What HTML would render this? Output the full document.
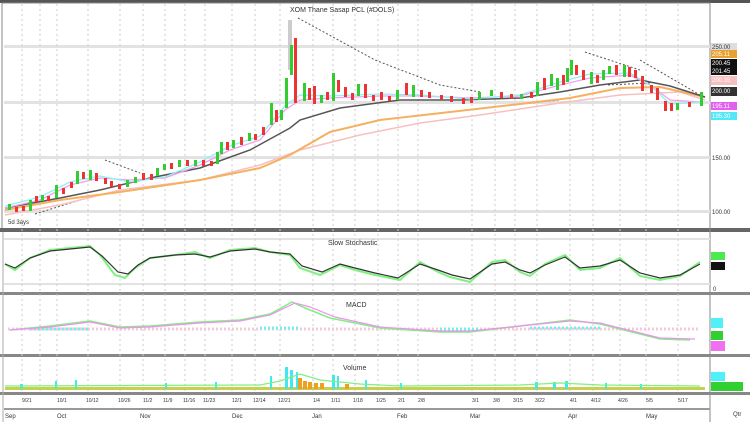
<!DOCTYPE html>
<html><head><meta charset="utf-8"><style>
html,body{margin:0;padding:0;background:#fff;width:750px;height:422px;overflow:hidden}
svg{display:block}
text{font-family:"Liberation Sans",sans-serif}
</style></head><body>
<svg width="750" height="422" viewBox="0 0 750 422" xmlns="http://www.w3.org/2000/svg">
<rect x="0" y="0" width="750" height="422" fill="#fff"/>
<rect x="0" y="0" width="750" height="3" fill="#555"/>
<!-- panel borders -->
<rect x="2" y="3" width="708" height="226" fill="none" stroke="#888" stroke-width="1"/>
<rect x="0" y="228" width="750" height="4" fill="#666"/>
<rect x="0" y="292" width="750" height="3" fill="#888"/>
<rect x="0" y="354" width="750" height="3" fill="#888"/>
<rect x="0" y="392" width="750" height="3" fill="#888"/>
<line x1="710" y1="3" x2="710" y2="422" stroke="#888"/>
<line x1="3" y1="232" x2="3" y2="422" stroke="#aaa"/>
<!-- horizontal grid -->
<g fill="#e2e2e2">
<rect x="4" y="45" width="706" height="3"/><rect x="4" y="101" width="706" height="3"/>
<rect x="4" y="156" width="706" height="3"/><rect x="4" y="210" width="706" height="3"/>
<rect x="4" y="238" width="706" height="2"/><rect x="4" y="283" width="706" height="2"/>
</g>
<!-- vertical dotted grid -->
<g stroke="#ccc" stroke-dasharray="2,3">
<path d="M22 4V392M40 4V392M57 4V392M88 4V392M120 4V392M143 4V392M165 4V392M185 4V392M205 4V392M232 4V392M255 4V392M280 4V392M313 4V392M333 4V392M355 4V392M378 4V392M398 4V392M418 4V392M472 4V392M495 4V392M515 4V392M537 4V392M570 4V392M593 4V392M620 4V392M646 4V392M678 4V392"/>
</g>
<text x="290" y="12" font-size="7" fill="#333">XOM Thane Sasap PCL (#DOLS)</text>
<text x="8" y="224" font-size="6" fill="#333">5d  3ays</text>
<!-- dotted trend lines -->
<g stroke="#555" stroke-dasharray="2,2" fill="none" stroke-width="1">
<path d="M298 18L375 60L440 85L480 92"/><path d="M105 160L140 173"/><path d="M585 52L640 70"/><path d="M640 60L700 95"/>
<path d="M35 214L80 200"/><path d="M485 108L560 100"/><path d="M608 85L650 83"/>
</g>
<!-- MAs -->
<polyline fill="none" stroke="#f7c0c0" stroke-width="1.5" points="5,215 60,205 120,190 200,180 260,165 300,150 360,135 420,123 480,115 560,103 620,95 680,92 705,100"/>
<polyline fill="none" stroke="#f5b060" stroke-width="2" points="5,210 60,200 120,192 200,180 260,168 290,155 330,132 380,120 450,112 520,104 570,98 620,88 660,87 705,97"/>
<polyline fill="none" stroke="#555" stroke-width="1.5" points="5,208 60,198 100,190 150,178 200,168 250,150 290,128 300,120 340,108 400,100 460,100 520,98 560,92 600,85 640,80 670,86 705,97"/>
<polyline fill="none" stroke="#f0a0f0" stroke-width="1.3" points="5,208 40,200 70,185 100,178 130,180 165,178 200,165 230,150 260,140 285,110 300,100 330,98 380,96 420,96 470,98 520,96 560,85 590,78 630,75 650,85 670,100 700,102"/>
<polyline fill="none" stroke="#90f0f0" stroke-width="1.3" points="5,206 40,197 70,182 100,176 130,182 165,177 200,162 230,146 260,136 285,106 300,95 330,96 380,94 420,95 470,99 520,95 560,82 590,74 630,73 650,85 670,104 700,102"/>
<!-- candles -->
<g>
<rect x="8" y="204" width="3" height="6" fill="#3c3"/><rect x="15" y="207" width="3" height="5" fill="#e33"/><rect x="22" y="206" width="3" height="5" fill="#e33"/><rect x="29" y="200" width="3" height="11" fill="#3c3"/><rect x="35" y="196" width="3" height="6" fill="#e33"/><rect x="41" y="195" width="3" height="6" fill="#3c3"/><rect x="47" y="196" width="3" height="5" fill="#e33"/><rect x="55" y="185" width="3" height="13" fill="#3c3"/><rect x="62" y="188" width="3" height="6" fill="#e33"/><rect x="70" y="182" width="3" height="6" fill="#e33"/><rect x="76" y="171" width="3" height="13" fill="#3c3"/><rect x="82" y="172" width="3" height="7" fill="#e33"/><rect x="89" y="170" width="3" height="10" fill="#3c3"/><rect x="95" y="173" width="3" height="8" fill="#e33"/><rect x="104" y="178" width="3" height="6" fill="#e33"/><rect x="110" y="181" width="3" height="6" fill="#e33"/><rect x="118" y="184" width="3" height="5" fill="#e33"/><rect x="126" y="180" width="3" height="7" fill="#3c3"/><rect x="134" y="177" width="3" height="6" fill="#3c3"/><rect x="142" y="173" width="3" height="7" fill="#e33"/><rect x="150" y="174" width="3" height="6" fill="#e33"/><rect x="156" y="168" width="3" height="8" fill="#3c3"/><rect x="163" y="164" width="3" height="6" fill="#3c3"/><rect x="170" y="163" width="3" height="6" fill="#e33"/><rect x="178" y="160" width="3" height="7" fill="#3c3"/><rect x="186" y="160" width="3" height="6" fill="#e33"/><rect x="194" y="160" width="3" height="6" fill="#3c3"/><rect x="202" y="160" width="3" height="6" fill="#e33"/><rect x="210" y="161" width="3" height="5" fill="#e33"/><rect x="216" y="152" width="3" height="12" fill="#3c3"/><rect x="220" y="142" width="3" height="12" fill="#3c3"/><rect x="226" y="142" width="3" height="8" fill="#e33"/><rect x="232" y="140" width="3" height="8" fill="#3c3"/><rect x="240" y="137" width="3" height="8" fill="#e33"/><rect x="248" y="133" width="3" height="8" fill="#3c3"/><rect x="254" y="134" width="3" height="6" fill="#e33"/><rect x="262" y="127" width="3" height="8" fill="#e33"/><rect x="270" y="103" width="3" height="22" fill="#3c3"/><rect x="275" y="110" width="3" height="12" fill="#e33"/><rect x="280" y="110" width="3" height="10" fill="#3c3"/><rect x="285" y="78" width="3" height="30" fill="#3c3"/><rect x="288" y="20" width="4" height="50" fill="#ccc"/><rect x="290" y="45" width="3" height="30" fill="#3c3"/><rect x="294" y="38" width="3" height="65" fill="#e33"/><rect x="303" y="83" width="3" height="18" fill="#3c3"/><rect x="308" y="88" width="3" height="12" fill="#e33"/><rect x="313" y="86" width="3" height="18" fill="#e33"/><rect x="320" y="95" width="3" height="8" fill="#3c3"/><rect x="326" y="92" width="3" height="8" fill="#e33"/><rect x="332" y="73" width="3" height="28" fill="#3c3"/><rect x="337" y="80" width="3" height="12" fill="#e33"/><rect x="344" y="87" width="3" height="10" fill="#e33"/><rect x="351" y="93" width="3" height="7" fill="#e33"/><rect x="357" y="84" width="3" height="12" fill="#3c3"/><rect x="364" y="84" width="3" height="14" fill="#e33"/><rect x="372" y="95" width="3" height="6" fill="#e33"/><rect x="380" y="92" width="3" height="8" fill="#e33"/><rect x="388" y="96" width="3" height="5" fill="#e33"/><rect x="396" y="90" width="3" height="10" fill="#3c3"/><rect x="405" y="83" width="3" height="12" fill="#e33"/><rect x="412" y="85" width="3" height="12" fill="#3c3"/><rect x="420" y="90" width="3" height="7" fill="#e33"/><rect x="428" y="92" width="3" height="6" fill="#e33"/><rect x="440" y="95" width="3" height="5" fill="#e33"/><rect x="450" y="96" width="3" height="6" fill="#e33"/><rect x="462" y="98" width="3" height="6" fill="#e33"/><rect x="470" y="97" width="3" height="6" fill="#e33"/><rect x="478" y="92" width="3" height="8" fill="#3c3"/><rect x="490" y="90" width="3" height="6" fill="#3c3"/><rect x="500" y="92" width="3" height="6" fill="#e33"/><rect x="510" y="94" width="3" height="5" fill="#e33"/><rect x="520" y="94" width="3" height="5" fill="#3c3"/><rect x="530" y="92" width="3" height="6" fill="#e33"/><rect x="536" y="82" width="3" height="14" fill="#3c3"/><rect x="543" y="78" width="3" height="12" fill="#e33"/><rect x="550" y="74" width="3" height="12" fill="#3c3"/><rect x="556" y="78" width="3" height="12" fill="#3c3"/><rect x="562" y="75" width="3" height="10" fill="#e33"/><rect x="566" y="68" width="3" height="14" fill="#3c3"/><rect x="570" y="60" width="3" height="15" fill="#3c3"/><rect x="575" y="65" width="3" height="10" fill="#e33"/><rect x="582" y="70" width="3" height="10" fill="#e33"/><rect x="590" y="72" width="3" height="12" fill="#3c3"/><rect x="596" y="75" width="3" height="8" fill="#e33"/><rect x="602" y="70" width="3" height="10" fill="#3c3"/><rect x="608" y="66" width="3" height="8" fill="#3c3"/><rect x="615" y="65" width="3" height="10" fill="#e33"/><rect x="623" y="65" width="3" height="12" fill="#3c3"/><rect x="628" y="67" width="3" height="10" fill="#e33"/><rect x="634" y="70" width="3" height="8" fill="#e33"/><rect x="641" y="76" width="3" height="15" fill="#e33"/><rect x="650" y="85" width="3" height="8" fill="#e33"/><rect x="656" y="88" width="3" height="12" fill="#e33"/><rect x="664" y="101" width="3" height="10" fill="#e33"/><rect x="670" y="103" width="3" height="8" fill="#e33"/><rect x="676" y="103" width="3" height="7" fill="#3c3"/><rect x="688" y="102" width="3" height="5" fill="#e33"/><rect x="700" y="92" width="3" height="14" fill="#3c3"/>
</g>
<!-- right labels main -->
<g font-size="6">
<rect x="711" y="43" width="26" height="7" fill="#ddd"/><text x="712" y="49" fill="#333">250.00</text>
<rect x="711" y="50" width="26" height="8" fill="#e8a030"/><text x="712" y="56" fill="#fff">205.11</text>
<rect x="711" y="59" width="26" height="8" fill="#111"/><text x="712" y="65" fill="#fff">200.45</text>
<rect x="711" y="67" width="26" height="8" fill="#111"/><text x="712" y="73" fill="#fff">201.45</text>
<rect x="711" y="76" width="26" height="9" fill="#f7c0c0"/><text x="712" y="82" fill="#fff">200.35</text>
<rect x="711" y="87" width="26" height="9" fill="#333"/><text x="712" y="93" fill="#fff">200.00</text>
<rect x="711" y="102" width="26" height="8" fill="#e060f0"/><text x="712" y="108" fill="#fff">195.11</text>
<rect x="711" y="112" width="26" height="8" fill="#50e8f8"/><text x="712" y="118" fill="#fff">195.30</text>
<text x="712" y="160" fill="#333">150.00</text>
<text x="712" y="214" fill="#333">100.00</text>
</g>
<!-- stochastic -->
<text x="328" y="245" font-size="7" fill="#333">Slow  Stochastic</text>
<polyline fill="none" stroke="#80f080" stroke-width="2" points="5,264 15,270 30,258 50,250 70,248 90,246 100,255 115,275 125,278 135,268 150,258 175,255 195,252 210,258 230,250 255,248 270,252 290,255 300,268 320,275 340,265 355,270 375,275 400,280 420,262 438,272 450,277 470,282 492,262 505,260 520,272 530,276 545,264 565,255 580,270 600,268 620,258 640,276 660,280 680,276 700,262"/>
<polyline fill="none" stroke="#333" stroke-width="1.2" points="5,264 15,268 30,258 50,251 70,249 90,247 102,256 118,272 128,274 138,265 150,258 175,255 195,254 210,257 230,251 255,249 270,252 290,254 302,266 322,272 340,264 355,268 375,273 398,278 420,264 438,270 452,275 470,279 492,264 505,262 520,270 530,273 545,265 565,257 580,268 600,266 620,260 640,273 660,278 680,275 700,264"/>
<g font-size="6"><rect x="711" y="252" width="14" height="8" fill="#50e850"/><rect x="711" y="262" width="14" height="8" fill="#111"/><text x="713" y="291" fill="#333">0</text></g>
<!-- MACD -->
<text x="346" y="307" font-size="7" fill="#333">MACD</text>
<g stroke-dasharray="2,2" stroke-width="3">
<path d="M8 329H200" stroke="#f8c8d8"/><path d="M30 329H90" stroke="#70f0f0"/><path d="M200 329H700" stroke="#f8c8d8"/><path d="M260 328H300" stroke="#70f0f0"/><path d="M530 328H600" stroke="#70f0f0"/><path d="M440 329H480" stroke="#70f0f0"/>
</g>
<polyline fill="none" stroke="#80f080" stroke-width="1.5" points="10,330 50,326 90,321 120,327 150,326 200,322 240,320 270,314 292,302 305,308 330,318 380,328 440,332 470,332 520,326 570,320 600,324 640,334 660,339 690,340"/>
<polyline fill="none" stroke="#f090f0" stroke-width="1.2" points="10,330 50,327 90,322 120,328 150,327 200,323 240,321 270,315 295,303 310,307 335,317 380,327 440,331 470,331 520,326 570,321 600,323 640,333 660,338 695,339"/>
<g><rect x="711" y="318" width="12" height="10" fill="#50f0f8"/><rect x="711" y="331" width="12" height="9" fill="#30d030"/><rect x="711" y="341" width="14" height="10" fill="#f070f0"/></g>
<!-- volume -->
<text x="343" y="370" font-size="7" fill="#333">Volume</text>
<rect x="5" y="387" width="700" height="3" fill="#c8d050"/>
<g fill="#40e8f0">
<rect x="20" y="384" width="3" height="5"/><rect x="55" y="381" width="2" height="8"/><rect x="75" y="380" width="2" height="9"/><rect x="165" y="383" width="2" height="6"/><rect x="215" y="382" width="2" height="7"/><rect x="270" y="376" width="2" height="13"/><rect x="285" y="367" width="3" height="22"/><rect x="290" y="370" width="3" height="19"/><rect x="296" y="372" width="2" height="17"/><rect x="332" y="375" width="3" height="14"/><rect x="337" y="376" width="2" height="13"/><rect x="365" y="380" width="2" height="9"/><rect x="400" y="383" width="2" height="6"/><rect x="535" y="382" width="3" height="7"/><rect x="553" y="382" width="3" height="7"/><rect x="565" y="381" width="3" height="8"/><rect x="605" y="383" width="2" height="6"/><rect x="640" y="384" width="2" height="5"/>
</g>
<g fill="#f0a020">
<rect x="298" y="378" width="4" height="11"/><rect x="303" y="381" width="4" height="8"/><rect x="308" y="382" width="4" height="7"/><rect x="314" y="383" width="4" height="6"/><rect x="320" y="383" width="4" height="6"/><rect x="345" y="384" width="4" height="5"/>
</g>
<polyline fill="none" stroke="#80f080" stroke-width="1.2" points="5,386 260,385 280,381 300,374 320,380 360,384 400,386 520,385 560,383 600,385 700,386"/>
<g><rect x="711" y="372" width="14" height="9" fill="#50f0f8"/><rect x="711" y="382" width="32" height="9" fill="#30d030"/></g>
<!-- date axis -->
<g font-size="5" fill="#333">
<text x="22" y="402">9/21</text><text x="57" y="402">10/1</text><text x="86" y="402">10/12</text><text x="118" y="402">10/26</text><text x="143" y="402">11/2</text><text x="163" y="402">11/9</text><text x="183" y="402">11/16</text><text x="203" y="402">11/23</text><text x="232" y="402">12/1</text><text x="253" y="402">12/14</text><text x="278" y="402">12/21</text><text x="313" y="402">1/4</text><text x="331" y="402">1/11</text><text x="353" y="402">1/18</text><text x="376" y="402">1/25</text><text x="398" y="402">2/1</text><text x="418" y="402">2/8</text><text x="472" y="402">3/1</text><text x="493" y="402">3/8</text><text x="513" y="402">3/15</text><text x="535" y="402">3/22</text><text x="570" y="402">4/1</text><text x="591" y="402">4/12</text><text x="618" y="402">4/26</text><text x="646" y="402">5/5</text><text x="678" y="402">5/17</text>
</g>
<rect x="4" y="408" width="706" height="2" fill="#999"/>
<g font-size="6" fill="#333">
<text x="5" y="418">Sep</text><text x="57" y="418">Oct</text><text x="140" y="418">Nov</text><text x="232" y="418">Dec</text><text x="312" y="418">Jan</text><text x="397" y="418">Feb</text><text x="470" y="418">Mar</text><text x="568" y="418">Apr</text><text x="646" y="418">May</text><text x="733" y="416">Qtr</text>
</g>
</svg>
</body></html>
